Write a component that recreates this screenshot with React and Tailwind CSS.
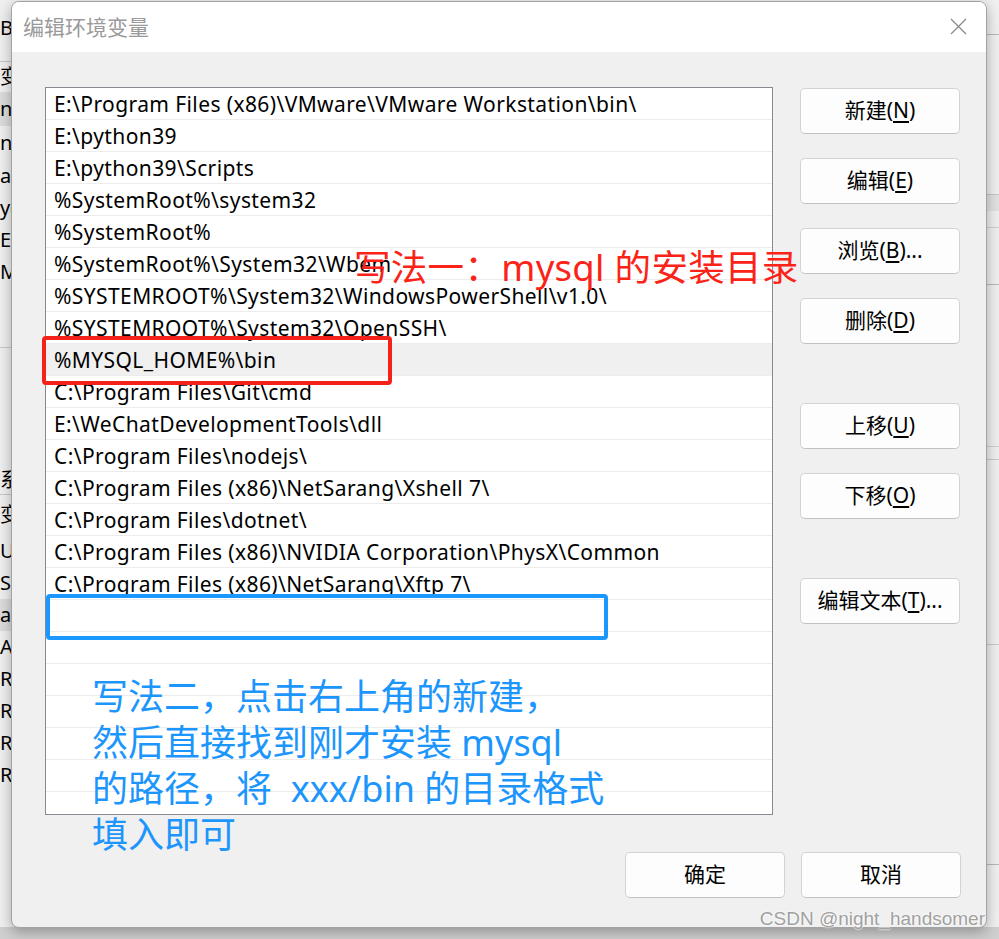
const paths = [
  'E:\\Program Files (x86)\\VMware\\VMware Workstation\\bin\\',
  'E:\\python39',
  'E:\\python39\\Scripts',
  '%SystemRoot%\\system32',
  '%SystemRoot%',
  '%SystemRoot%\\System32\\Wbem',
  '%SYSTEMROOT%\\System32\\WindowsPowerShell\\v1.0\\',
  '%SYSTEMROOT%\\System32\\OpenSSH\\',
  '%MYSQL_HOME%\\bin',
  'C:\\Program Files\\Git\\cmd',
  'E:\\WeChatDevelopmentTools\\dll',
  'C:\\Program Files\\nodejs\\',
  'C:\\Program Files (x86)\\NetSarang\\Xshell 7\\',
  'C:\\Program Files\\dotnet\\',
  'C:\\Program Files (x86)\\NVIDIA Corporation\\PhysX\\Common',
  'C:\\Program Files (x86)\\NetSarang\\Xftp 7\\',
  '', '', '', '', '', '', '', '',
];

// fragments of the window behind the dialog, left edge
const leftBits = [
  { h: 'h-[12px]', t: '' },
  { h: 'h-[32px]', t: 'B' },
  { h: 'h-[18px]', t: '', line: true },
  { h: 'h-[30px]', t: '变' },
  { h: 'h-[34px]', t: 'n', hi: true },
  { h: 'h-[34px]', t: 'n' },
  { h: 'h-[32px]', t: 'at' },
  { h: 'h-[32px]', t: 'y(' },
  { h: 'h-[32px]', t: 'EM' },
  { h: 'h-[32px]', t: 'M' },
  { h: 'h-[60px]', t: '', line: true },
  { h: 'h-[117px]', t: '' },
  { h: 'h-[30px]', t: '系', line: true },
  { h: 'h-[40px]', t: '变' },
  { h: 'h-[32px]', t: 'U' },
  { h: 'h-[32px]', t: 'S' },
  { h: 'h-[32px]', t: 'at', hi: true },
  { h: 'h-[32px]', t: 'AT' },
  { h: 'h-[32px]', t: 'RO' },
  { h: 'h-[32px]', t: 'RO' },
  { h: 'h-[32px]', t: 'RO' },
  { h: 'h-[32px]', t: 'RO' },
];

const Btn = ({ label, u, tail = '', className = '' }) => (
  <button className={`w-[160px] h-[46px] shrink-0 rounded-[5px] border border-[#d3d3d3] border-b-[#c2c2c2] bg-[#fdfdfd] text-[21px] text-black flex items-center justify-center ${className}`}>
    {label}
    {u && (
      <span>
        (<span className="underline underline-offset-[3px]">{u}</span>)
      </span>
    )}
    {tail}
  </button>
);

export default function App() {
  return (
    <div className="relative w-[999px] h-[939px] overflow-hidden bg-[#cfcfcf] font-['Noto_Sans','Noto_Sans_CJK_SC',sans-serif]">
      {/* window behind */}
      <div className="absolute inset-0 bottom-[12px] bg-[#f0f0f0] flex justify-between">
        <div className="w-[12px] overflow-hidden flex flex-col">
          {leftBits.map((b, i) => (
            <div
              key={i}
              className={`${b.h} shrink-0 flex items-center whitespace-nowrap text-[20px] text-black ${b.hi ? 'bg-[#dcdcdc]' : ''} ${b.line ? 'border-b border-[#c8c8c8]' : ''}`}
            >
              {b.t}
            </div>
          ))}
        </div>
        <div className="w-[12px] flex flex-col">
          <div className="h-[35px] border-b border-[#b8b8b8]" />
          <div className="h-[160px] border-b border-[#c8c8c8]" />
          <div className="h-[16px] bg-[#e2e2e2]" />
          <div className="h-[17px] border-b border-[#d0d0d0]" />
          <div className="h-[57px] border-b border-[#b8b8b8]" />
          <div className="h-[162px] border-b border-[#d0d0d0]" />
          <div className="h-[13px] border-b border-[#c8c8c8]" />
          <div className="h-[185px] border-b border-[#c8c8c8]" />
          <div className="h-[220px] border-b border-[#b8b8b8]" />
        </div>
      </div>

      {/* dialog */}
      <div className="absolute left-[11px] top-[1px] w-[976px] h-[927px] rounded-[8px] border border-[#a3a3a3] bg-[#f0f0f0] overflow-hidden shadow-[0_4px_14px_rgba(0,0,0,0.3)] flex flex-col">
        <div className="h-[50px] shrink-0 bg-white flex items-center justify-between pl-[11px] pr-[19px]">
          <span className="text-[21px] text-[#9a9a9a] font-['Noto_Sans_CJK_SC',sans-serif]">编辑环境变量</span>
          <svg width="17" height="17" viewBox="0 0 17 17" className="mt-[-1px]">
            <path d="M1 1 L16 16 M16 1 L1 16" stroke="#8a8a8a" strokeWidth="1.3" fill="none" />
          </svg>
        </div>

        <div className="flex-1 flex flex-col pl-[33px] pr-[25px] pt-[35px]">
          <div className="flex">
            <div className="w-[728px] h-[728px] shrink-0 border border-[#868a91] bg-white overflow-hidden">
              {paths.map((p, i) => (
                <div
                  key={i}
                  className={`h-[32px] border-b border-[#ececec] pl-[8px] pt-[3px] flex items-center whitespace-nowrap text-[21px] tracking-[0.4px] text-black ${i === 8 ? 'bg-[#f0f0f0]' : ''}`}
                >
                  {p}
                </div>
              ))}
            </div>
            <div className="ml-[27px] pt-[1px] flex flex-col">
              <Btn label="新建" u="N" />
              <Btn label="编辑" u="E" className="mt-[24px]" />
              <Btn label="浏览" u="B" tail="..." className="mt-[24px]" />
              <Btn label="删除" u="D" className="mt-[24px]" />
              <Btn label="上移" u="U" className="mt-[59px]" />
              <Btn label="下移" u="O" className="mt-[24px]" />
              <Btn label="编辑文本" u="T" tail="..." className="mt-[59px]" />
            </div>
          </div>
          <div className="mt-[37px] flex justify-end gap-[16px]">
            <Btn label="确定" />
            <Btn label="取消" />
          </div>
        </div>
      </div>

      {/* annotations */}
      <div className="absolute left-[42px] top-[336px] w-[350px] h-[49px] border-[4px] border-[#f5221b] rounded-[4px]" />
      <div className="absolute left-[354px] top-[242px] text-[36.5px] leading-[50px] tracking-[0.3px] text-[#fb2317] whitespace-nowrap">
        写法一：mysql 的安装目录
      </div>
      <div className="absolute left-[46px] top-[594px] w-[562px] h-[46px] border-[4px] border-[#1b98ff] rounded-[4px]" />
      <div className="absolute left-[92px] top-[674px] text-[36px] leading-[46px] text-[#1c96fc] whitespace-pre">
        {'写法二，点击右上角的新建，\n然后直接找到刚才安装 mysql\n的路径，将  xxx/bin 的目录格式\n填入即可'}
      </div>

      <div className="absolute right-[14px] top-[905px] text-[19px] leading-[28px] text-[#a0a0a0] font-['Liberation_Sans',sans-serif] [text-shadow:0_0_2px_#fff,0_0_2px_#fff]">
        CSDN @night_handsomer
      </div>
    </div>
  );
}
